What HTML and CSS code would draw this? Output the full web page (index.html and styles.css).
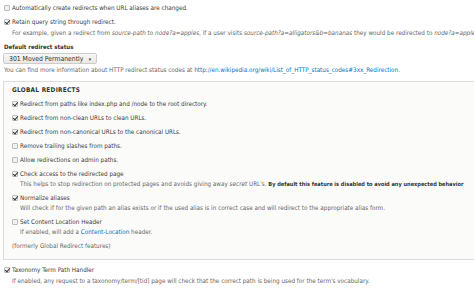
FILE: index.html
```html
<!DOCTYPE html>
<html lang="en">
  <head>
    <meta charset="UTF-8" />
    <title>Redirect settings</title>
    <link rel="stylesheet" href="styles.css">
  </head>
  <body>
    <div class="page">
      <div class="form-item">
        <div class="check"><span class="box"></span><label>Automatically create redirects when URL aliases are changed.</label></div>
      </div>
      <div class="form-item">
        <div class="check"><span class="box checked"></span><label>Retain query string through redirect.</label></div>
        <div class="description">For example, given a redirect from <em>source-path</em> to <em>node?a=apples</em>, if a user visits <em>source-path?a=alligators&amp;b=bananas</em> they would be redirected to <em>node?a=apples</em></div>
      </div>
      <div class="form-item status">
        <div class="title">Default redirect status</div>
        <div class="select">301 Moved Permanently <span class="arrow">▾</span></div>
        <div class="description">You can find more information about HTTP redirect status codes at <a href="#">http://en.wikipedia.org/wiki/List_of_HTTP_status_codes#3xx_Redirection</a>.</div>
      </div>

      <div class="fieldset">
        <div class="legend">GLOBAL REDIRECTS</div>
        <div class="form-item">
          <div class="check"><span class="box checked"></span><label>Redirect from paths like index.php and /node to the root directory.</label></div>
        </div>
        <div class="form-item">
          <div class="check"><span class="box checked"></span><label>Redirect from non-clean URLs to clean URLs.</label></div>
        </div>
        <div class="form-item">
          <div class="check"><span class="box checked"></span><label>Redirect from non-canonical URLs to the canonical URLs.</label></div>
        </div>
        <div class="form-item">
          <div class="check"><span class="box"></span><label>Remove trailing slashes from paths.</label></div>
        </div>
        <div class="form-item">
          <div class="check"><span class="box"></span><label>Allow redirections on admin paths.</label></div>
        </div>
        <div class="form-item">
          <div class="check"><span class="box checked"></span><label>Check access to the redirected page</label></div>
          <div class="description">This helps to stop redirection on protected pages and avoids giving away <em>secret</em> URL's. <strong>By default this feature is disabled to avoid any unexpected behavior</strong></div>
        </div>
        <div class="form-item">
          <div class="check"><span class="box checked"></span><label>Normalize aliases</label></div>
          <div class="description">Will check if for the given path an alias exists or if the used alias is in correct case and will redirect to the appropriate alias form.</div>
        </div>
        <div class="form-item">
          <div class="check"><span class="box"></span><label>Set Content Location Header</label></div>
          <div class="description">If enabled, will add a <a href="#">Content-Location</a> header.</div>
        </div>
        <div class="note">(formerly Global Redirect features)</div>
      </div>

      <div class="form-item">
        <div class="check"><span class="box checked"></span><label>Taxonomy Term Path Handler</label></div>
        <div class="description">If enabled, any request to a taxonomy/term/[tid] page will check that the correct path is being used for the term's vocabulary.</div>
      </div>
    </div>
  </body>
</html>
```

FILE: styles.css
```css
* {
  box-sizing: border-box;
  margin: 0;
  padding: 0;
}

body {
  background: #fff;
  color: #3a3a3a;
  font-family: "DejaVu Sans Condensed", "DejaVu Sans", sans-serif;
  font-size: 6.3px;
  line-height: 8px;
  overflow: hidden;
}

.page {
  width: 560px;
  padding: 4px 0 0 4px;
  white-space: nowrap;
}

a {
  color: #0074bd;
  text-decoration: none;
}

strong {
  font-size: 5.6px;
  color: #333;
}

.form-item {
  margin-bottom: 6px;
}

.check {
  display: flex;
  align-items: center;
  gap: 2px;
  height: 8px;
}

.box {
  position: relative;
  flex: none;
  width: 6px;
  height: 6px;
  border: 1px solid #bdbdbd;
  border-radius: 1px;
  background: #f2f2f2;
}

.box.checked::after {
  content: "";
  position: absolute;
  left: 1px;
  top: -1px;
  width: 2px;
  height: 4px;
  border: solid #333;
  border-width: 0 1px 1px 0;
  transform: rotate(40deg);
}

.description {
  margin: 3px 0 0 8px;
  color: #666;
}

.status {
  margin-bottom: 7px;
}

.status .description {
  margin: 2px 0 0 0;
}

.title {
  font-size: 6px;
  font-weight: bold;
  color: #333;
}

.select {
  display: flex;
  align-items: center;
  justify-content: space-between;
  width: 94px;
  height: 11px;
  margin: 2px 0 0 -1px;
  padding: 0 5px 0 5px;
  border: 1px solid #ccc;
  border-radius: 2px;
  background: linear-gradient(#f7f7f5, #e8e8e4);
  color: #333;
  font-size: 6.8px;
}

.arrow {
  font-size: 5px;
}

.fieldset {
  margin: 0 0 6px -1px;
  padding: 4px 8px 9px;
  border: 1px solid #dcdcdc;
  background: #fbfbfa;
}

.legend {
  margin-bottom: 6px;
  font-size: 6.4px;
  font-weight: bold;
  letter-spacing: 0.3px;
  color: #333;
}

.fieldset .description {
  margin: 2px 0 1px 8px;
}

.note {
  color: #666;
}
```
